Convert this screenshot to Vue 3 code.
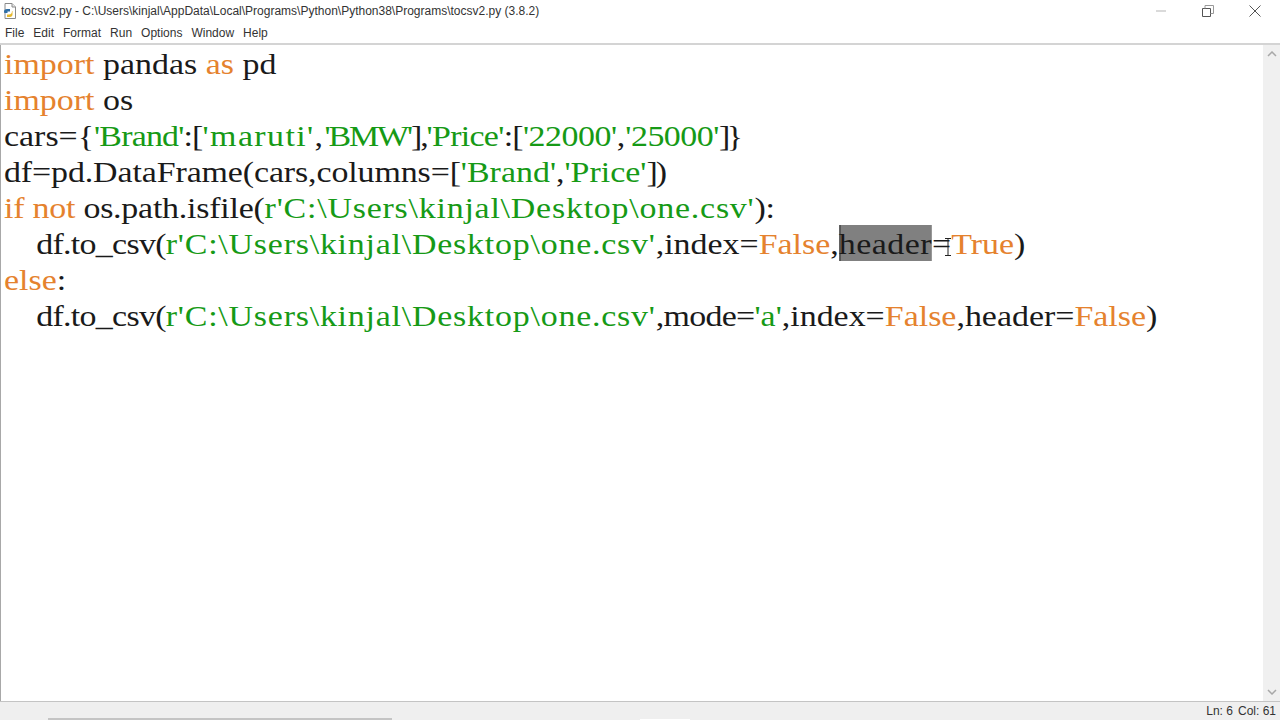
<template>
  <div class="idle-window">
    <header class="title-bar">
      <svg class="file-icon" viewBox="0 0 16 16" width="16" height="16">
        <path d="M3 .5h7l3.500 3.500v11.500H3z" fill="#fff" stroke="#8a8a8a" />
        <path d="M10 .5V4h3.500" fill="#e8e8e8" stroke="#8a8a8a" />
        <path d="M2 9c0-2 1-3 3-3h3v2.500H5.500V10H3.500C2.500 10 2 9.800 2 9z" fill="#2f6ea5" />
        <path d="M10 8c0 2-1 3.500-3 3.500H5V14h3c1.500 0 2.500-1 2.500-2.500V8z" fill="#e6b92e" />
      </svg>
      <span class="title-text">tocsv2.py - C:\Users\kinjal\AppData\Local\Programs\Python\Python38\Programs\tocsv2.py (3.8.2)</span>
      <div class="window-controls">
        <svg viewBox="0 0 12 12" width="12" height="12"><path d="M1 6h10" stroke="#b5b5b5" stroke-width="1" /></svg>
        <svg viewBox="0 0 12 12" width="12" height="12" fill="none" stroke="#555">
          <path d="M.5 3.500h8v8h-8z" />
          <path d="M3 3.500V.5h8.500v8H8.500" stroke="#999" />
        </svg>
        <svg viewBox="0 0 12 12" width="12" height="12"><path d="M.5.5l11 11M11.500.5l-11 11" stroke="#555" fill="none" /></svg>
      </div>
    </header>

    <nav class="menu-bar">
      <span v-for="item in menu" :key="item">{{ item }}</span>
    </nav>

    <main class="editor-row">
      <section class="editor">
        <div class="code">
          <div class="line"><span class="kw">import</span> pandas <span class="kw">as</span> pd</div>
          <div class="line"><span class="kw">import</span> os</div>
          <div class="line">cars={<span class="str ls-n1">'Brand'</span><span class="ls-n1">:[</span><span class="str ls-p1">'maruti'</span><span class="ls-p1">,</span><span class="str ls-n2">'BMW'</span><span class="ls-n2">],</span><span class="str ls-n05">'Price'</span><span class="ls-n05">:[</span><span class="str digits">'22000'</span>,<span class="str digits">'25000'</span><span class="ls-n4">]}</span></div>
          <div class="line"><span class="ls-n01">df=pd.DataFrame(cars,columns=[</span><span class="str">'Brand'</span>,<span class="str">'Price'</span><span class="ls-n2">])</span></div>
          <div class="line ls-n02"><span class="kw">if not</span> os.path.isfile(<span class="str path">r'C:\Users\kinjal\Desktop\one.csv'</span>):</div>
          <div class="line indented"><span class="ls-n05">df.to_csv(</span><span class="str path">r'C:\Users\kinjal\Desktop\one.csv'</span>,index=<span class="kw">False</span>,<span class="selected">header</span>=<span class="kw">True</span>)</div>
          <div class="line"><span class="kw">else</span>:</div>
          <div class="line indented"><span class="ls-n05">df.to_csv(</span><span class="str path">r'C:\Users\kinjal\Desktop\one.csv'</span><span class="ls-n05">,mode=</span><span class="str">'a'</span>,index=<span class="kw">False</span>,header=<span class="kw">False</span>)</div>
        </div>
      </section>
      <aside class="scrollbar">
        <svg viewBox="0 0 10 6" width="10" height="6"><path d="M1 5l4-4 4 4" fill="none" stroke="#a8a8a8" stroke-width="1.500" /></svg>
        <svg viewBox="0 0 10 6" width="10" height="6"><path d="M1 1l4 4 4-4" fill="none" stroke="#a8a8a8" stroke-width="1.500" /></svg>
      </aside>
      <svg class="ibeam" viewBox="0 0 8 18" width="8" height="18">
        <path d="M1 .5h6M1 17.500h6M4 .5v17" fill="none" stroke="#222" stroke-width="1" />
      </svg>
    </main>

    <footer class="status-bar">
      <span>Ln: 6</span>
      <span>Col: 61</span>
      <i class="progress"></i>
      <i class="player-mark"></i>
    </footer>
  </div>
</template>

<script setup>
const menu = ["File", "Edit", "Format", "Run", "Options", "Window", "Help"];
</script>

<style>
html,
body {
  margin: 0;
  background: #fff;
}
</style>

<style scoped>
.idle-window {
  width: 1280px;
  height: 720px;
  display: flex;
  flex-direction: column;
  overflow: hidden;
  background: #fff;
  font-family: "Liberation Sans", Arial, sans-serif;
  color: #333;
}

.title-bar {
  height: 22px;
  display: flex;
  align-items: center;
  padding-left: 2px;
  gap: 3px;
  font-size: 12px;
}

.file-icon {
  flex-shrink: 0;
}

.window-controls {
  margin-left: auto;
  display: flex;
  align-items: center;
  gap: 35px;
  padding-right: 19px;
}

.menu-bar {
  height: 21px;
  display: flex;
  align-items: center;
  gap: 9px;
  padding-left: 5px;
  font-size: 12px;
  border-bottom: 2px solid #d4d4d4;
}

.editor-row {
  position: relative;
  flex: 1;
  display: flex;
  min-height: 0;
}

.editor {
  flex: 1;
  padding: 1px 0 0 3px;
  border-left: 1px solid #a8a8a8;
  overflow: hidden;
  font-family: "Liberation Serif", "Times New Roman", serif;
  font-size: 29px;
  line-height: 36px;
  color: #1a1a1a;
}

/* the editor font in the shot is a wide modern face, stretch the serif to fit */
.code {
  transform: scaleX(1.17);
  transform-origin: left top;
}

.line {
  white-space: pre;
}

.indented {
  padding-left: 27.5px;
}

.kw {
  color: #e5822e;
}

.str {
  color: #169a16;
}

.line .path {
  letter-spacing: 0.66px;
}

.digits {
  letter-spacing: -0.4px;
}

.ls-p1 {
  letter-spacing: 1.2px;
}

.ls-n01 {
  letter-spacing: -0.1px;
}

.ls-n02 {
  letter-spacing: -0.2px;
}

.ls-n05 {
  letter-spacing: -0.6px;
}

.ls-n1 {
  letter-spacing: -0.7px;
}

.ls-n2 {
  letter-spacing: -1.8px;
}

.ls-n4 {
  letter-spacing: -3px;
}

.selected {
  background: #808080;
  box-shadow: inset 1px 0 #333;
  padding: 3px 0 1px;
  letter-spacing: 0.4px;
}

.ibeam {
  position: absolute;
  left: 944px;
  top: 193px;
}

.scrollbar {
  width: 17px;
  background: #f0f0f0;
  display: flex;
  flex-direction: column;
  align-items: center;
  justify-content: space-between;
  padding: 6px 0;
  box-sizing: border-box;
}

.status-bar {
  position: relative;
  height: 19px;
  box-sizing: border-box;
  border-top: 1px solid #c4c4c4;
  background: #efefef;
  display: flex;
  justify-content: flex-end;
  align-items: center;
  gap: 5px;
  padding-right: 4px;
  font-size: 12px;
}

.progress {
  position: absolute;
  left: 48px;
  bottom: 0;
  width: 344px;
  height: 2px;
  background: #c4c4c4;
}

.player-mark {
  position: absolute;
  left: 640px;
  bottom: 0;
  width: 50px;
  height: 1px;
  background: #fff;
}
</style>
